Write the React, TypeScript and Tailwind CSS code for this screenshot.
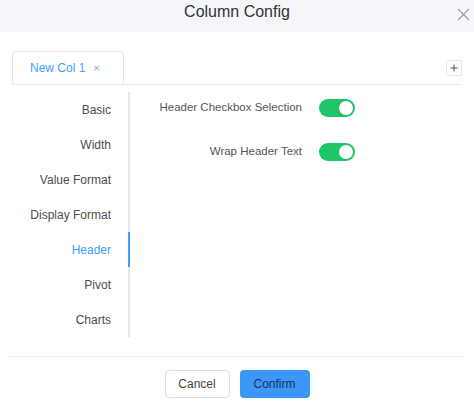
import React, { useState } from "react";

const navItems = ["Basic", "Width", "Value Format", "Display Format", "Header", "Pivot", "Charts"];

const Toggle: React.FC<{ on: boolean; onChange: () => void }> = ({ on, onChange }) => (
  <button
    onClick={onChange}
    className={`relative w-[36px] h-[18px] rounded-full transition-colors ${on ? "bg-[#1ec467]" : "bg-[#dcdfe6]"}`}
  >
    <span
      className={`absolute top-[2px] w-[14px] h-[14px] rounded-full bg-white transition-all ${on ? "left-[20px]" : "left-[2px]"}`}
    />
  </button>
);

export default function App() {
  const [active, setActive] = useState("Header");
  const [checkbox, setCheckbox] = useState(true);
  const [wrap, setWrap] = useState(true);

  return (
    <div className="w-[474px] h-[402px] bg-white overflow-hidden font-['Liberation_Sans',Arial,sans-serif] text-[#606266]">
      {/* Title bar */}
      <div className="relative h-[32px] bg-[#f4f6fa] flex items-center justify-center">
        <h2 className="text-[16px] text-[#303133] leading-none -mt-[8px]">Column Config</h2>
        <button className="absolute right-[4px] top-[7px] w-[14px] h-[14px] flex items-center justify-center">
          <svg width="13" height="13" viewBox="0 0 13 13" stroke="#9a9a9a" strokeWidth="1.1" fill="none">
            <path d="M1 1 L12 12 M12 1 L1 12" />
          </svg>
        </button>
      </div>

      {/* Tabs */}
      <div className="mt-[19px] mx-[12px] h-[34px] flex items-stretch border-b border-[#e9ebef]">
        <div className="w-[112px] border border-b-0 border-[#e4e7ed] rounded-t-[4px] flex items-center pl-[17px] text-[12px] text-[#409eff]">
          <span>New Col 1</span>
          <span className="ml-[8px] text-[11px] text-[#6aaef5]">×</span>
        </div>
        <div className="flex-1" />
        <div className="flex items-center">
          <button className="w-[16px] h-[16px] border border-[#e4e7ed] rounded-[2px] flex items-center justify-center">
            <svg width="8" height="8" viewBox="0 0 8 8" stroke="#555" strokeWidth="1">
              <path d="M4 0.5 V7.5 M0.5 4 H7.5" />
            </svg>
          </button>
        </div>
      </div>

      {/* Body */}
      <div className="mt-[7px] flex h-[245px]">
        <div className="w-[130px] border-r-2 border-[#e4e7ed] flex flex-col">
          {navItems.map((item) => {
            const isActive = item === active;
            return (
              <div
                key={item}
                onClick={() => setActive(item)}
                className={`h-[35px] flex items-center justify-end pr-[17px] text-[12px] cursor-pointer -mr-[2px] border-r-2 ${
                  isActive ? "text-[#409eff] border-[#409eff]" : "text-[#4d4d4d] border-transparent"
                }`}
              >
                {item}
              </div>
            );
          })}
        </div>
        <div className="flex-1 flex flex-col gap-[12px]">
          <div className="h-[32px] flex items-center">
            <span className="w-[172px] text-right text-[11.5px] text-[#555]">Header Checkbox Selection</span>
            <span className="ml-[17px] flex">
              <Toggle on={checkbox} onChange={() => setCheckbox(!checkbox)} />
            </span>
          </div>
          <div className="h-[32px] flex items-center">
            <span className="w-[172px] text-right text-[11.5px] text-[#555]">Wrap Header Text</span>
            <span className="ml-[17px] flex">
              <Toggle on={wrap} onChange={() => setWrap(!wrap)} />
            </span>
          </div>
        </div>
      </div>

      {/* Footer */}
      <div className="mt-[19px] mx-[8px] border-t border-[#f2f3f5] pt-[13px] flex justify-center gap-[10px]">
        <button className="w-[65px] h-[28px] border border-[#dcdfe6] rounded-[4px] text-[12px] text-[#444] bg-white">
          Cancel
        </button>
        <button className="w-[70px] h-[28px] rounded-[4px] text-[12px] text-[#15335f] bg-[#3d97f7]">
          Confirm
        </button>
      </div>
    </div>
  );
}
